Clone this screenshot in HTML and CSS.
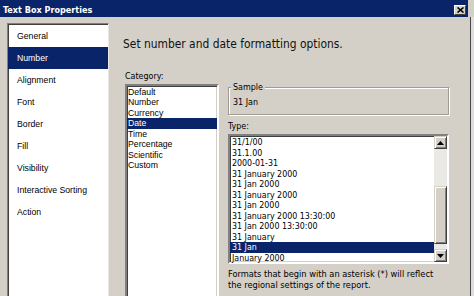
FILE: index.html
```html
<!DOCTYPE html>
<html lang="en">
<head>
<meta charset="utf-8">
<title>Text Box Properties</title>
<link rel="stylesheet" href="styles.css">
</head>
<body>
<div class="screen">
  <header class="titlebar">
    <span class="title">Text Box Properties</span>
    <span class="close" aria-label="Close">
      <svg width="7" height="6" viewBox="0 0 7 6"><path d="M0.5 0.5 L6.5 5.5 M6.5 0.5 L0.5 5.5" stroke="#000" stroke-width="1.6" fill="none"/></svg>
    </span>
  </header>
  <div class="body">
    <ul class="nav">
      <li>General</li>
      <li class="selected">Number</li>
      <li>Alignment</li>
      <li>Font</li>
      <li>Border</li>
      <li>Fill</li>
      <li>Visibility</li>
      <li>Interactive Sorting</li>
      <li>Action</li>
    </ul>
    <main class="content">
      <h1 class="heading">Set number and date formatting options.</h1>
      <div class="columns">
        <section class="category">
          <div class="label">Category:</div>
          <ul class="listbox catlist">
            <li>Default</li>
            <li>Number</li>
            <li>Currency</li>
            <li class="selected">Date</li>
            <li>Time</li>
            <li>Percentage</li>
            <li>Scientific</li>
            <li>Custom</li>
          </ul>
        </section>
        <section class="type">
          <fieldset class="sample">
            <legend>Sample</legend>
            <div class="sample-value">31 Jan</div>
          </fieldset>
          <div class="label type-label">Type:</div>
          <div class="listbox typelist">
            <ul class="items">
              <li>31/1/00</li>
              <li>31.1.00</li>
              <li>2000-01-31</li>
              <li>31 January 2000</li>
              <li>31 Jan 2000</li>
              <li>31 January 2000</li>
              <li>31 Jan 2000</li>
              <li>31 January 2000 13:30:00</li>
              <li>31 Jan 2000 13:30:00</li>
              <li>31 January</li>
              <li class="selected">31 Jan</li>
              <li>January 2000</li>
            </ul>
            <div class="scrollbar">
              <div class="sbtn"><svg width="7" height="4" viewBox="0 0 7 4"><polygon points="3.5,0 7,4 0,4" fill="#000"/></svg></div>
              <div class="track track-top"></div>
              <div class="thumb"></div>
              <div class="track track-bottom"></div>
              <div class="sbtn"><svg width="7" height="4" viewBox="0 0 7 4"><polygon points="0,0 7,0 3.5,4" fill="#000"/></svg></div>
            </div>
          </div>
          <p class="note">Formats that begin with an asterisk (*) will reflect the regional settings of the report.</p>
        </section>
      </div>
    </main>
    <div class="edge"></div>
  </div>
</div>
</body>
</html>
```
FILE: styles.css
```css
* { box-sizing: border-box; }
html, body { margin: 0; padding: 0; }
body {
  width: 474px;
  height: 296px;
  overflow: hidden;
  background: #dcdcdc;
}
.screen {
  width: 474px;
  height: 296px;
  overflow: hidden;
  background: #d4d0c8;
  display: flex;
  flex-direction: column;
}
.titlebar {
  width: 468px;
  height: 17px;
  flex: none;
  background: #0a246a;
  display: flex;
  align-items: center;
  padding: 3px 2px 0 3px;
}
.title {
  color: #fff;
  font-family: "DejaVu Sans Condensed", "DejaVu Sans", sans-serif;
  font-stretch: condensed;
  font-weight: bold;
  font-size: 9px;
  line-height: 12px;
}
.close {
  margin-left: auto;
  width: 12px;
  height: 10px;
  background: #d4d0c8;
  border-top: 1px solid #fff;
  border-left: 1px solid #fff;
  border-right: 1px solid #404040;
  border-bottom: 1px solid #404040;
  display: flex;
  align-items: center;
  justify-content: center;
}
.close svg { display: block; }
.body {
  flex: 1;
  display: flex;
  padding-left: 7px;
  min-height: 0;
}
.nav {
  list-style: none;
  margin: 6px 0 0 0;
  padding: 1px 0 0 0;
  width: 102px;
  height: 290px;
  flex: none;
  background: #fff;
  border-top: 1px solid #808080;
  border-left: 1px solid #808080;
  border-right: 1px solid #e8e6e2;
  box-shadow: inset 1px 1px 0 #404040;
  font-family: "Liberation Sans", Arial, sans-serif;
  font-size: 8.7px;
  color: #000;
}
.nav li {
  height: 22px;
  line-height: 22px;
  padding-left: 9px;
  white-space: nowrap;
}
.nav li.selected {
  background: #0a246a;
  color: #fff;
}
.content {
  margin-left: 14px;
  width: 347px;
  flex: none;
  display: flex;
  flex-direction: column;
  font-family: "DejaVu Sans Condensed", "DejaVu Sans", sans-serif;
  font-stretch: condensed;
  color: #000;
}
.heading {
  margin: 20px 0 0 0;
  font-weight: normal;
  font-size: 11.9px;
  line-height: 14px;
  white-space: nowrap;
  color: #111;
}
.columns {
  margin-top: 20px;
  margin-left: 2px;
  display: flex;
  gap: 9px;
  align-items: flex-start;
}
.label {
  font-size: 8.9px;
  line-height: 11px;
  white-space: nowrap;
}
.category {
  width: 94px;
  flex: none;
}
.listbox {
  background: #fff;
  border-style: solid;
  border-width: 2px;
  border-color: #808080 #fff #fff #808080;
  box-shadow: inset 1px 1px 0 #404040, inset -1px -1px 0 #d4d0c8;
}
.catlist {
  list-style: none;
  margin: 2px 0 0 0;
  padding: 0.5px 0 0 0;
  height: 240px;
  font-family: "Liberation Sans", Arial, sans-serif;
  font-stretch: normal;
  font-size: 8.7px;
}
.catlist li {
  height: 10.55px;
  line-height: 10.55px;
  padding-left: 1px;
  white-space: nowrap;
}
.catlist li.selected,
.typelist li.selected {
  background: #0a246a;
  color: #fff;
}
.type {
  width: 221px;
  flex: none;
  padding-top: 11px;
  display: flex;
  flex-direction: column;
}
.sample {
  margin: 0;
  padding: 5px 4px 6px 4px;
  border: 1px solid #a09c94;
  box-shadow: inset 1px 1px 0 #fff, 1px 1px 0 #fff;
  min-width: 0;
}
.sample legend {
  margin-left: -2px;
  padding: 0 2px;
  font-size: 8.9px;
  line-height: 10px;
  background: #d4d0c8;
}
.sample-value {
  font-size: 8.9px;
  line-height: 11px;
}
.type-label {
  margin-top: 6px;
  line-height: 10px;
}
.typelist {
  margin-top: 3px;
  height: 130px;
  display: flex;
}
.items {
  list-style: none;
  margin: 0;
  padding: 1px 0 0 0;
  flex: 1;
  min-width: 0;
  font-size: 8.8px;
}
.items li {
  height: 10.55px;
  line-height: 10.55px;
  padding-left: 2px;
  white-space: nowrap;
}
.scrollbar {
  width: 13px;
  flex: none;
  display: flex;
  flex-direction: column;
}
.sbtn, .thumb {
  background: #d4d0c8;
  border-style: solid;
  border-width: 1px;
  border-color: #d4d0c8 #404040 #404040 #d4d0c8;
  box-shadow: inset 1px 1px 0 #fff, inset -1px -1px 0 #808080;
}
.sbtn {
  height: 13px;
  flex: none;
  display: flex;
  align-items: center;
  justify-content: center;
}
.sbtn svg { display: block; }
.track {
  background: #ebe9e5;
  flex: none;
}
.track-top { height: 37px; }
.thumb { height: 58px; flex: none; }
.track-bottom { flex: 1; }
.note {
  margin: 5px 0 0 0;
  font-size: 9.2px;
  line-height: 10.5px;
  width: 212px;
}
.edge {
  flex: 1;
  border-left: 1px solid #4a4a4a;
  background: #dedede;
  margin-left: 0;
}
```
